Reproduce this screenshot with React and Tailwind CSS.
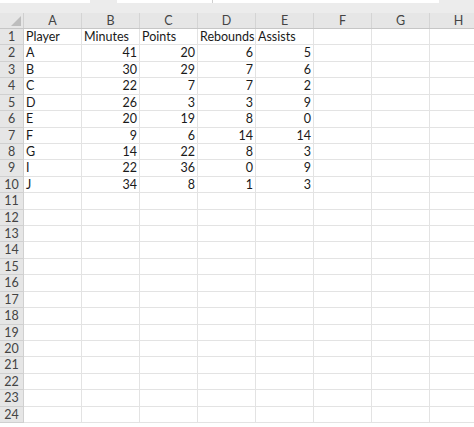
import React from "react";

const columns = ["A", "B", "C", "D", "E", "F", "G", "H"];

const header = ["Player", "Minutes", "Points", "Rebounds", "Assists"];

const rows = [
  ["A", 41, 20, 6, 5],
  ["B", 30, 29, 7, 6],
  ["C", 22, 7, 7, 2],
  ["D", 26, 3, 3, 9],
  ["E", 20, 19, 8, 0],
  ["F", 9, 6, 14, 14],
  ["G", 14, 22, 8, 3],
  ["I", 22, 36, 0, 9],
  ["J", 34, 8, 1, 3],
];

const TOTAL_ROWS = 24;

const Cell = ({ value }) => {
  const numeric = typeof value === "number";
  return (
    <div
      className={`w-[58px] shrink-0 border-r border-b border-[#e3e3e3] px-[2px] leading-[16px] whitespace-nowrap overflow-visible ${
        numeric ? "text-right" : "text-left"
      }`}
    >
      {value}
    </div>
  );
};

const App = () => {
  const data = [header, ...rows];

  return (
    <div
      className="w-[474px] h-[427px] overflow-hidden bg-white text-[12.5px] text-[#1a1a1a]"
      style={{ fontFamily: "Lato, 'Open Sans', sans-serif" }}
    >
      {/* strip left over from the formula bar */}
      <div className="flex h-[13px] bg-[#ececec]">
        <div className="h-[3px] w-[90px] bg-white" />
        <div className="h-[3px] w-[27px]" />
        <div className="h-[3px] w-[96px] bg-white border-r border-[#cfcfcf]" />
        <div className="h-[3px] w-[226px] bg-white" />
      </div>

      {/* column letters */}
      <div className="flex h-[16px] bg-[#e6e6e6] border-b border-[#c6c6c6] text-[#444]">
        <div className="relative w-[24px] shrink-0 border-r border-[#d0d0d0]">
          <div className="absolute right-[2px] bottom-[2px] w-0 h-0 border-l-[10px] border-l-transparent border-b-[10px] border-b-[#bdbdbd]" />
        </div>
        {columns.map((c) => (
          <div
            key={c}
            className="w-[58px] shrink-0 border-r border-[#d4d4d4] text-center leading-[15px]"
          >
            {c}
          </div>
        ))}
      </div>

      {Array.from({ length: TOTAL_ROWS }, (_, i) => {
        const values = data[i] || [];
        return (
          <div key={i} className="flex h-[16.43px]">
            <div className="w-[24px] shrink-0 bg-[#e6e6e6] border-r border-b border-[#d0d0d0] text-center text-[#444] leading-[16px]">
              {i + 1}
            </div>
            {columns.map((c, j) => (
              <Cell key={c} value={values[j] ?? ""} />
            ))}
          </div>
        );
      })}
    </div>
  );
};

export default App;
